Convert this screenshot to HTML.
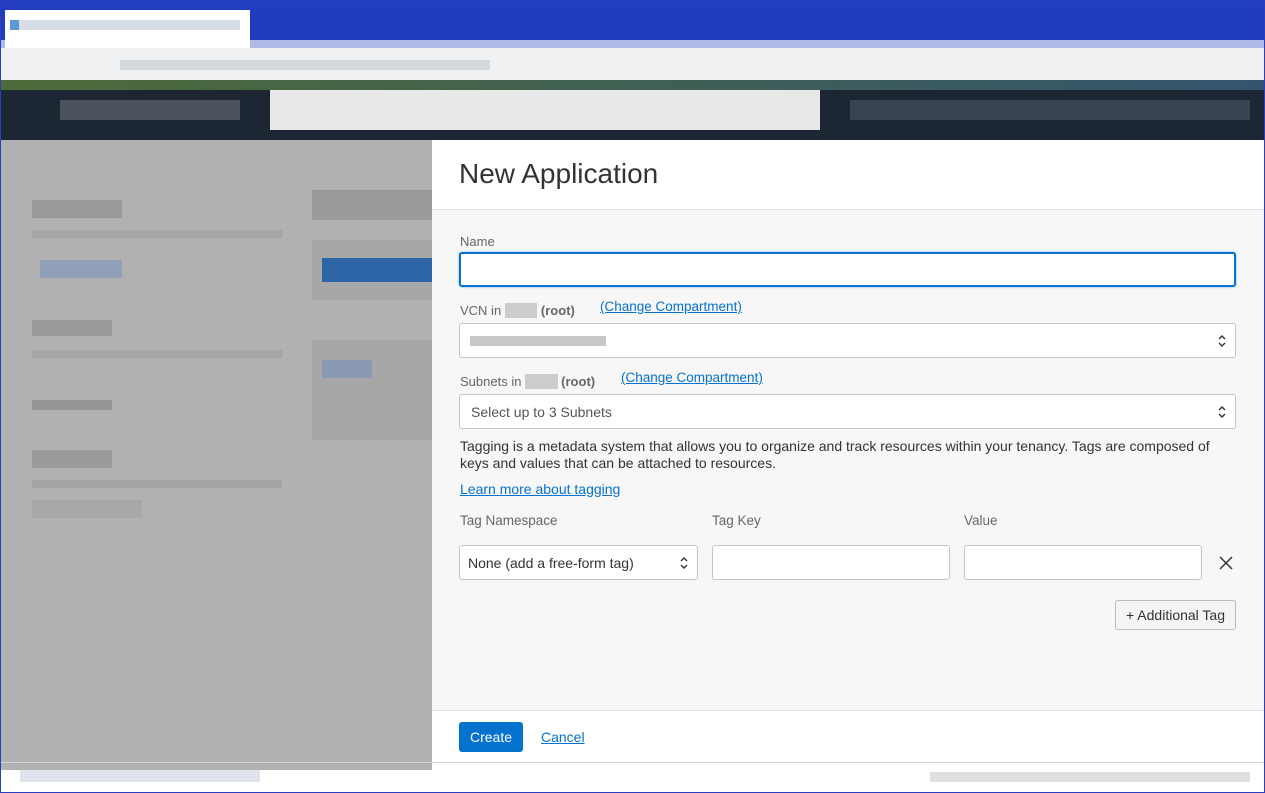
<!DOCTYPE html><html><head><style>
*{box-sizing:border-box;margin:0;padding:0}
body{width:1265px;height:793px;overflow:hidden;font-family:"Liberation Sans",sans-serif;position:relative;background:#fff}
.a{position:absolute}
.lbl{position:absolute;font-size:13px;color:#666}
.inp{position:absolute;background:#fff;border:1px solid #c4c4c4;border-radius:3px;height:35px}
.lnk{color:#0572ce;text-decoration:underline;font-size:13.5px;position:absolute}
.chev{position:absolute;right:8px;top:9px;width:10px;height:16px}
.b{position:absolute;background:#c9c9c9}
</style></head><body>
<div class="a" style="left:0;top:0;width:1265px;height:40px;background:#213cbe"></div>
<div class="a" style="left:0;top:40px;width:1265px;height:8px;background:#b0b8e6"></div>
<div class="a" style="left:5px;top:10px;width:245px;height:38px;background:#fff"></div>
<div class="a" style="left:10px;top:20px;width:230px;height:10px;background:linear-gradient(90deg,#5a9ad0 0 4%,#d6dde6 4% 100%)"></div>
<div class="a" style="left:0;top:48px;width:1265px;height:32px;background:#f0f1f3"></div>
<div class="a" style="left:120px;top:60px;width:370px;height:10px;background:#d4d8dc"></div>
<div class="a" style="left:0;top:80px;width:1265px;height:10px;background:linear-gradient(90deg,#4c6b38,#34556f)"></div>
<div class="a" style="left:0;top:90px;width:1265px;height:50px;background:#1d2633"></div>
<div class="a" style="left:270px;top:90px;width:550px;height:40px;background:#e8e8e8"></div>
<div class="a" style="left:60px;top:100px;width:180px;height:20px;background:#4a525e"></div>
<div class="a" style="left:850px;top:100px;width:400px;height:20px;background:#3a4350"></div>
<div class="a" style="left:0;top:140px;width:432px;height:630px;background:#b1b1b1"></div>
<div class="b" style="left:32px;top:200px;width:90px;height:18px;background:#9a9a9a"></div>
<div class="b" style="left:32px;top:230px;width:250px;height:8px;background:#a5a5a5"></div>
<div class="b" style="left:40px;top:260px;width:82px;height:18px;background:#8fa0b8"></div>
<div class="b" style="left:32px;top:320px;width:80px;height:16px;background:#9a9a9a"></div>
<div class="b" style="left:32px;top:350px;width:250px;height:8px;background:#a5a5a5"></div>
<div class="b" style="left:32px;top:400px;width:80px;height:10px;background:#959595"></div>
<div class="b" style="left:32px;top:450px;width:80px;height:18px;background:#9a9a9a"></div>
<div class="b" style="left:32px;top:480px;width:250px;height:8px;background:#a5a5a5"></div>
<div class="b" style="left:32px;top:500px;width:110px;height:18px;background:#a8a8a8"></div>
<div class="b" style="left:312px;top:190px;width:120px;height:30px;background:#9a9a9a"></div>
<div class="b" style="left:312px;top:240px;width:120px;height:60px;background:#a7a7a7"></div>
<div class="b" style="left:322px;top:258px;width:110px;height:24px;background:#2d65a6"></div>
<div class="b" style="left:312px;top:340px;width:120px;height:100px;background:#a7a7a7"></div>
<div class="b" style="left:322px;top:360px;width:50px;height:18px;background:#8a9ab5"></div>
<div class="a" style="left:432px;top:140px;width:833px;height:622px;background:#f7f7f7"></div>
<div class="a" style="left:432px;top:140px;width:833px;height:70px;background:#fff;border-bottom:1px solid #e2e2e2"></div>
<div class="a" style="left:459px;top:158px;font-size:28px;color:#333">New Application</div>
<div class="lbl" style="left:460px;top:234px">Name</div>
<div class="inp" style="left:459px;top:252px;width:777px;border:2px solid #0572ce;box-shadow:0 0 2px #6ab0ee"></div>
<div class="lbl" style="left:460px;top:303px">VCN in <span style="background:#ccc;color:#ccc">xxxxx</span> <b>(root)</b></div>
<div class="lnk" style="left:600px;top:299px">(Change Compartment)</div>
<div class="inp" style="left:459px;top:323px;width:777px"><div class="a" style="left:10px;top:12px;width:136px;height:10px;background:#c8c8c8"></div><svg class="chev" viewBox="0 0 10 16"><path d="M2 6l3-3 3 3M2 10l3 3 3-3" fill="none" stroke="#333" stroke-width="1.4"/></svg></div>
<div class="lbl" style="left:460px;top:374px">Subnets in <span style="background:#ccc;color:#ccc">xxxxx</span> <b>(root)</b></div>
<div class="lnk" style="left:621px;top:370px">(Change Compartment)</div>
<div class="inp" style="left:459px;top:394px;width:777px"><span style="position:absolute;left:11px;top:9px;font-size:14px;color:#555">Select up to 3 Subnets</span><svg class="chev" viewBox="0 0 10 16"><path d="M2 6l3-3 3 3M2 10l3 3 3-3" fill="none" stroke="#333" stroke-width="1.4"/></svg></div>
<div class="a" style="left:460px;top:438px;width:770px;font-size:14px;line-height:17px;color:#333">Tagging is a metadata system that allows you to organize and track resources within your tenancy. Tags are composed of keys and values that can be attached to resources.</div>
<div class="lnk" style="left:460px;top:481px;font-size:14px">Learn more about tagging</div>
<div class="lbl" style="left:460px;top:513px;font-size:13.5px">Tag Namespace</div>
<div class="lbl" style="left:712px;top:513px;font-size:13.5px">Tag Key</div>
<div class="lbl" style="left:964px;top:513px;font-size:13.5px">Value</div>
<div class="inp" style="left:459px;top:545px;width:239px"><span style="position:absolute;left:8px;top:9px;font-size:14px;color:#333">None (add a free-form tag)</span><svg class="chev" viewBox="0 0 10 16"><path d="M2 6l3-3 3 3M2 10l3 3 3-3" fill="none" stroke="#333" stroke-width="1.4"/></svg></div>
<div class="inp" style="left:712px;top:545px;width:238px"></div>
<div class="inp" style="left:964px;top:545px;width:238px"></div>
<svg class="a" style="left:1219px;top:556px" width="14" height="14" viewBox="0 0 14 14"><path d="M1 1l12 12M13 1L1 13" stroke="#333" stroke-width="1.5"/></svg>
<div class="a" style="left:1115px;top:600px;width:121px;height:30px;border:1px solid #bbb;border-radius:3px;background:#f4f4f4;font-size:14px;color:#333;text-align:center;line-height:28px">+ Additional Tag</div>
<div class="a" style="left:432px;top:710px;width:833px;height:52px;background:#fff;border-top:1px solid #e2e2e2"></div>
<div class="a" style="left:459px;top:722px;width:64px;height:30px;background:#0572ce;border-radius:3px;color:#fff;font-size:14px;text-align:center;line-height:30px">Create</div>
<div class="lnk" style="left:541px;top:729px;font-size:14px">Cancel</div>
<div class="a" style="left:0;top:762px;width:1265px;height:1px;background:#d0d4e0"></div>
<div class="a" style="left:20px;top:770px;width:240px;height:12px;background:#dfe4ec"></div>
<div class="a" style="left:930px;top:772px;width:320px;height:10px;background:#e0e0e0"></div>
<div class="a" style="left:0;top:0;width:1265px;height:793px;border:1px solid #2a3fbf"></div>
</body></html>
